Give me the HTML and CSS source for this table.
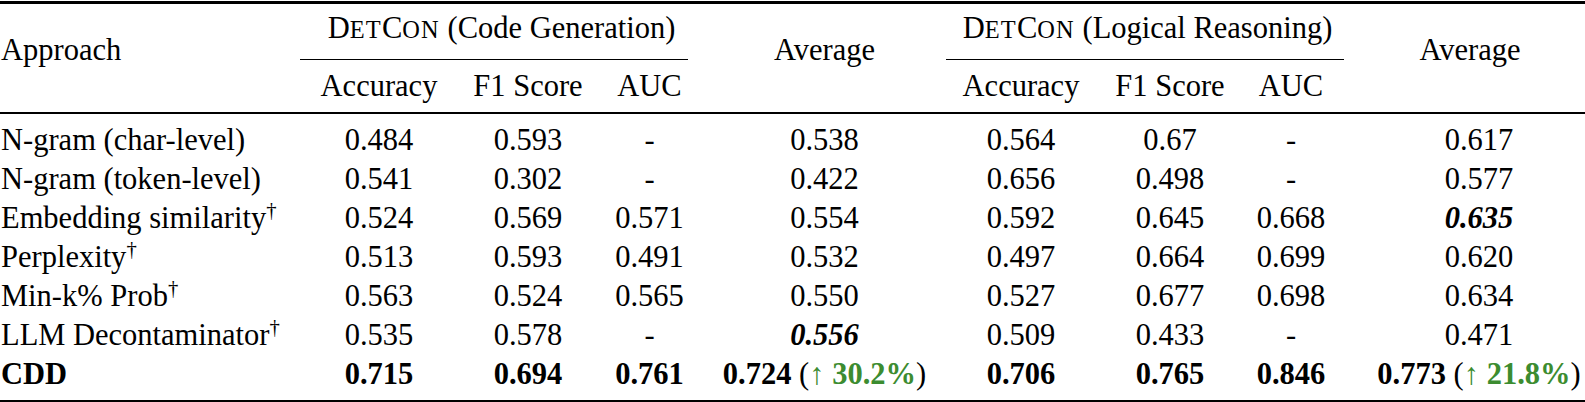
FILE: index.html
```html
<!DOCTYPE html>
<html lang="en">
<head>
<meta charset="utf-8">
<title>DetCon results</title>
<link rel="stylesheet" href="styles.css">
</head>
<body>
<div class="table">
  <div class="span-head label">Approach</div>
  <div class="h1 group g1">D<span class="sc">ET</span>C<span class="sc">ON</span> (Code Generation)</div>
  <div class="span-head">Average</div>
  <div class="h1 group g2">D<span class="sc">ET</span>C<span class="sc">ON</span> (Logical Reasoning)</div>
  <div class="span-head last-head">Average</div>

  <div class="cmid c1"></div>
  <div class="cmid c2"></div>

  <div class="h2">Accuracy</div>
  <div class="h2">F1 Score</div>
  <div class="h2">AUC</div>
  <div class="h2">Accuracy</div>
  <div class="h2">F1 Score</div>
  <div class="h2">AUC</div>

  <div class="midrule"></div>

  <div class="cell label">N-gram (char-level)</div>
  <div class="cell">0.484</div><div class="cell">0.593</div><div class="cell">-</div>
  <div class="cell">0.538</div>
  <div class="cell">0.564</div><div class="cell">0.67</div><div class="cell">-</div>
  <div class="cell last">0.617</div>

  <div class="cell label">N-gram (token-level)</div>
  <div class="cell">0.541</div><div class="cell">0.302</div><div class="cell">-</div>
  <div class="cell">0.422</div>
  <div class="cell">0.656</div><div class="cell">0.498</div><div class="cell">-</div>
  <div class="cell last">0.577</div>

  <div class="cell label">Embedding similarity<sup class="dag">†</sup></div>
  <div class="cell">0.524</div><div class="cell">0.569</div><div class="cell">0.571</div>
  <div class="cell">0.554</div>
  <div class="cell">0.592</div><div class="cell">0.645</div><div class="cell">0.668</div>
  <div class="cell last"><b><i>0.635</i></b></div>

  <div class="cell label">Perplexity<sup class="dag">†</sup></div>
  <div class="cell">0.513</div><div class="cell">0.593</div><div class="cell">0.491</div>
  <div class="cell">0.532</div>
  <div class="cell">0.497</div><div class="cell">0.664</div><div class="cell">0.699</div>
  <div class="cell last">0.620</div>

  <div class="cell label">Min-k% Prob<sup class="dag">†</sup></div>
  <div class="cell">0.563</div><div class="cell">0.524</div><div class="cell">0.565</div>
  <div class="cell">0.550</div>
  <div class="cell">0.527</div><div class="cell">0.677</div><div class="cell">0.698</div>
  <div class="cell last">0.634</div>

  <div class="cell label">LLM Decontaminator<sup class="dag">†</sup></div>
  <div class="cell">0.535</div><div class="cell">0.578</div><div class="cell">-</div>
  <div class="cell"><b><i>0.556</i></b></div>
  <div class="cell">0.509</div><div class="cell">0.433</div><div class="cell">-</div>
  <div class="cell last">0.471</div>

  <div class="cell label"><b>CDD</b></div>
  <div class="cell"><b>0.715</b></div><div class="cell"><b>0.694</b></div><div class="cell"><b>0.761</b></div>
  <div class="cell"><b>0.724</b> (<span class="up">↑</span> <b class="gain">30.2%</b>)</div>
  <div class="cell"><b>0.706</b></div><div class="cell"><b>0.765</b></div><div class="cell"><b>0.846</b></div>
  <div class="cell last"><b>0.773</b> (<span class="up">↑</span> <b class="gain">21.8%</b>)</div>
</div>
</body>
</html>
```

FILE: styles.css
```css
* {
  box-sizing: border-box;
  margin: 0;
  padding: 0;
}

html,
body {
  background: #ffffff;
}

body {
  margin: 0;
  padding-top: 1px;
  font-family: "Liberation Serif", "Times New Roman", serif;
  font-size: 30.5px;
  color: #000000;
  overflow: hidden;
}

.table {
  display: grid;
  grid-template-columns: 303.5px 151px 147px 96px 254px 139px 159px 83px 252.5px;
  border-top: 3px solid #000000;
  border-bottom: 3px solid #000000;
  padding-bottom: 5.5px;
}

.span-head {
  grid-row: span 3;
  padding-top: 28.7px;
  line-height: 34px;
  text-align: center;
  white-space: nowrap;
}

.span-head.label {
  text-align: left;
  padding-left: 1px;
}

.last-head {
  padding-left: 22.5px;
}

.h1 {
  line-height: 34px;
  padding-top: 6.7px;
  padding-bottom: 12.3px;
  text-align: center;
  white-space: nowrap;
}

.group {
  grid-column: span 3;
}

.g1 {
  padding-left: 2px;
}

.g2 {
  padding-left: 11px;
}

.sc {
  font-size: 0.8em;
  letter-spacing: 1.2px;
}

.cmid {
  grid-column: span 3;
  height: 1px;
  background: #000000;
}

.c1 {
  margin-left: -3.5px;
  margin-right: 9.5px;
}

.c2 {
  margin-left: -5.5px;
  margin-right: -11.5px;
}

.h2 {
  line-height: 34px;
  padding-top: 8.7px;
  padding-bottom: 9.3px;
  text-align: center;
  white-space: nowrap;
}

.midrule {
  grid-column: 1 / -1;
  height: 2px;
  background: #000000;
  margin-bottom: 7.5px;
}

.cell {
  line-height: 39px;
  text-align: center;
  white-space: nowrap;
}

.cell.label {
  text-align: left;
  padding-left: 1px;
}

.cell.last {
  padding-left: 40.5px;
}

.dag {
  font-size: 0.68em;
  line-height: 0;
  vertical-align: 0.55em;
}

.up {
  color: #3c8c30;
  font-weight: normal;
}

.gain {
  color: #3c8c30;
}
```
